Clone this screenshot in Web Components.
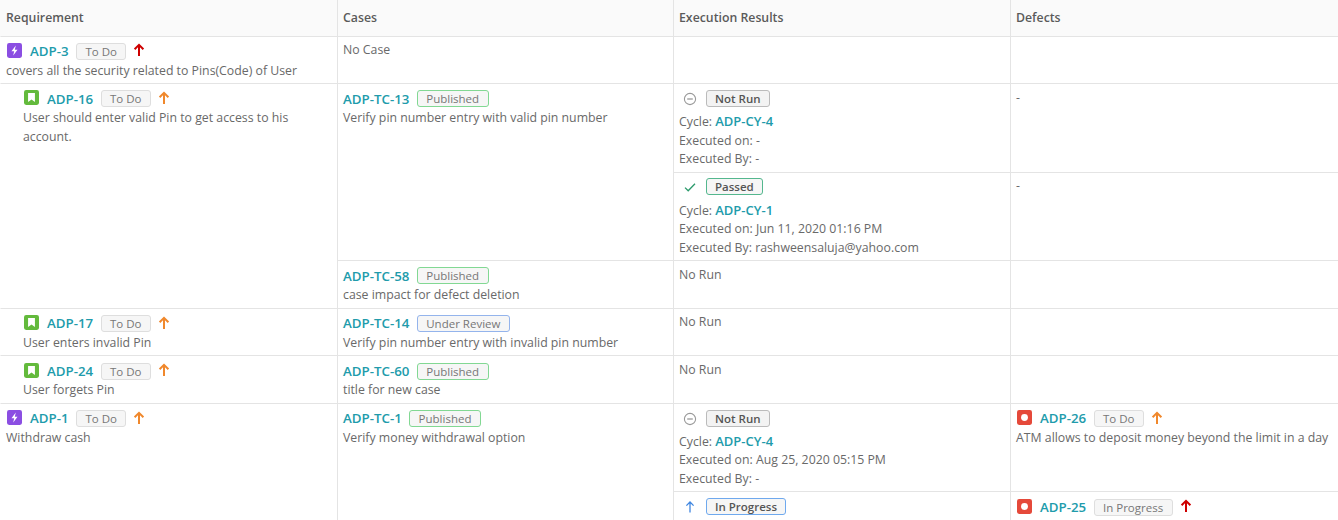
<!DOCTYPE html>
<html>
<head>
<meta charset="utf-8">
<title>Traceability</title>
<style>
    html, body { margin: 0; padding: 0; background: #fff; height: 520px; overflow: hidden; }
    body { font-family: "Open Sans", "Liberation Sans", sans-serif; font-size: 12.3px; color: #696969; }
</style>
</head>
<body>
<trace-table>
    <trace-head lead>Requirement</trace-head>
    <trace-head>Cases</trace-head>
    <trace-head>Execution Results</trace-head>
    <trace-head>Defects</trace-head>

    <trace-cell lead><issue-item type="epic" key="ADP-3" status="To Do" priority="highest">covers all the security related to Pins(Code) of User</issue-item></trace-cell>
    <trace-cell>No Case</trace-cell>
    <trace-cell></trace-cell>
    <trace-cell></trace-cell>

    <trace-cell lead span="3" indent><issue-item type="story" key="ADP-16" status="To Do" priority="high">User should enter valid Pin to get access to his account.</issue-item></trace-cell>
    <trace-cell span="2"><case-item key="ADP-TC-13" status="Published">Verify pin number entry with valid pin number</case-item></trace-cell>
    <trace-cell><exec-item result="Not Run" cycle="ADP-CY-4" on="-" by="-"></exec-item></trace-cell>
    <trace-cell>-</trace-cell>
    <trace-cell><exec-item result="Passed" cycle="ADP-CY-1" on="Jun 11, 2020 01:16 PM" by="rashweensaluja@yahoo.com"></exec-item></trace-cell>
    <trace-cell>-</trace-cell>
    <trace-cell><case-item key="ADP-TC-58" status="Published">case impact for defect deletion</case-item></trace-cell>
    <trace-cell>No Run</trace-cell>
    <trace-cell></trace-cell>

    <trace-cell lead indent><issue-item type="story" key="ADP-17" status="To Do" priority="high">User enters invalid Pin</issue-item></trace-cell>
    <trace-cell><case-item key="ADP-TC-14" status="Under Review">Verify pin number entry with invalid pin number</case-item></trace-cell>
    <trace-cell>No Run</trace-cell>
    <trace-cell></trace-cell>

    <trace-cell lead indent><issue-item type="story" key="ADP-24" status="To Do" priority="high">User forgets Pin</issue-item></trace-cell>
    <trace-cell><case-item key="ADP-TC-60" status="Published">title for new case</case-item></trace-cell>
    <trace-cell>No Run</trace-cell>
    <trace-cell></trace-cell>

    <trace-cell lead span="2"><issue-item type="epic" key="ADP-1" status="To Do" priority="high">Withdraw cash</issue-item></trace-cell>
    <trace-cell span="2"><case-item key="ADP-TC-1" status="Published">Verify money withdrawal option</case-item></trace-cell>
    <trace-cell><exec-item result="Not Run" cycle="ADP-CY-4" on="Aug 25, 2020 05:15 PM" by="-"></exec-item></trace-cell>
    <trace-cell><issue-item type="bug" key="ADP-26" status="To Do" priority="high">ATM allows to deposit money beyond the limit in a day</issue-item></trace-cell>
    <trace-cell tall><exec-item result="In Progress"></exec-item></trace-cell>
    <trace-cell tall><issue-item type="bug" key="ADP-25" status="In Progress" priority="highest"></issue-item></trace-cell>
</trace-table>

<script>
    const ICONS = {
        epic: `<svg viewBox="0 0 14 14" width="15" height="15"><rect width="14" height="14" rx="2" fill="#8b4ee2"/><path d="M8.2 2.4 4.2 7.8h2.5L5.8 11.6l4-5.4H7.3z" fill="#fff"/></svg>`,
        story: `<svg viewBox="0 0 14 14" width="15" height="15"><rect width="14" height="14" rx="2" fill="#63ba3c"/><path d="M3.8 2.8h6.4v8.4L7 8.8l-3.2 2.4z" fill="#fff"/></svg>`,
        bug: `<svg viewBox="0 0 14 14" width="15" height="15"><rect width="14" height="14" rx="2" fill="#e5493a"/><circle cx="7" cy="7" r="3.2" fill="#fff"/></svg>`,
        highest: `<svg viewBox="0 0 12 14" width="12" height="14"><path d="M6 13V2M1.6 6.2 6 1.8l4.4 4.4" fill="none" stroke="#ce0000" stroke-width="2"/></svg>`,
        high: `<svg viewBox="0 0 12 14" width="12" height="14"><path d="M6 13V2M1.6 6.2 6 1.8l4.4 4.4" fill="none" stroke="#f0882c" stroke-width="2"/></svg>`,
        "Not Run": `<svg viewBox="0 0 14 14" width="14" height="14"><circle cx="7" cy="7" r="5.6" fill="none" stroke="#999" stroke-width="1.1"/><path d="M4.2 7h5.6" stroke="#888" stroke-width="1.1"/></svg>`,
        "Passed": `<svg viewBox="0 0 14 14" width="14" height="14"><path d="M2 7.6l3.2 3.2L12 3.8" fill="none" stroke="#2c9a6c" stroke-width="1.3"/></svg>`,
        "In Progress": `<svg viewBox="0 0 14 14" width="14" height="14"><path d="M7 12.5V2.2M3.4 5.6 7 2l3.6 3.6" fill="none" stroke="#3f86e0" stroke-width="1.3"/></svg>`
    }

    class TraceTable extends HTMLElement {
        constructor() {
            super()
            this.attachShadow({ mode: "open" })
            this.shadowRoot.innerHTML = `
            <style>
                :host { display: block; width: 1338px; }
                .grid {
                    display: grid;
                    grid-template-columns: 337px 336px 337px 328px;
                    grid-auto-rows: auto;
                }
            </style>
            <div class="grid"><slot></slot></div>`
        }
    }

    class TraceHead extends HTMLElement {
        constructor() {
            super()
            this.attachShadow({ mode: "open" })
            this.shadowRoot.innerHTML = `
            <style>
                :host {
                    display: block;
                    box-sizing: border-box;
                    height: 36.6px;
                    padding: 9px 5px 0;
                    line-height: 17px;
                    font-weight: 600;
                    color: #5a5a5a;
                    background: #fafafa;
                    border-left: 1px solid #e4e4e4;
                    border-bottom: 1px solid #e4e4e4;
                }
                :host([lead]) { border-left-color: transparent; }
            </style>
            <slot></slot>`
        }
    }

    class TraceCell extends HTMLElement {
        constructor() {
            super()
            this.attachShadow({ mode: "open" })
            this.shadowRoot.innerHTML = `
            <style>
                :host {
                    display: block;
                    box-sizing: border-box;
                    padding: 4.5px 5px 3.1px;
                    line-height: 18.5px;
                    border-left: 1px solid #e4e4e4;
                    border-bottom: 1px solid #e4e4e4;
                }
                :host([lead]) { border-left-color: transparent; }
                :host([indent]) { padding-left: 22px; }
                :host([tall]) { min-height: 88.5px; }
            </style>
            <slot></slot>`
        }
        connectedCallback() {
            const span = this.getAttribute("span")
            if (span) this.style.gridRow = `span ${span}`
        }
    }

    class StatusChip extends HTMLElement {
        constructor() {
            super()
            this.attachShadow({ mode: "open" })
            this.shadowRoot.innerHTML = `
            <style>
                :host {
                    display: inline-block;
                    box-sizing: border-box;
                    height: 17px;
                    padding: 0 8.5px;
                    line-height: 16px;
                    font-size: 11.5px;
                    color: #777;
                    background: #f6f6f6;
                    border: 1px solid #dedede;
                    border-radius: 3px;
                    white-space: nowrap;
                }
                :host([tone="published"]) { border-color: #82d893; }
                :host([tone="review"]) { border-color: #94b4ec; }
                :host([tone="notrun"]) { border-color: #bbb; color: #555; font-weight: 600; padding: 0 8px; background: #f3f3f3; }
                :host([tone="passed"]) { border-color: #54b78e; color: #555; font-weight: 600; padding: 0 8px; }
                :host([tone="progress"]) { border-color: #6fa9ee; color: #555; font-weight: 600; padding: 0 8px; }
            </style>
            <slot></slot>`
        }
    }

    const titleStyles = `
        .title { display: flex; align-items: center; height: 20.5px; }
        .key { font-size: 13.3px; font-weight: 600; color: #219bab; }
        status-chip { margin-left: 7.3px; }
        .pri { display: flex; margin-left: 7px; margin-top: -2px; }
        .icon { display: flex; margin: -2px 8px 0 1px; }
        .desc { display: block; }
    `

    class IssueItem extends HTMLElement {
        constructor() {
            super()
            this.attachShadow({ mode: "open" })
        }
        connectedCallback() {
            const type = this.getAttribute("type")
            const priority = this.getAttribute("priority")
            this.shadowRoot.innerHTML = `
            <style>
                :host { display: block; }
                ${titleStyles}
            </style>
            <div class="title">
                <span class="icon">${ICONS[type]}</span>
                <span class="key">${this.getAttribute("key")}</span>
                <status-chip>${this.getAttribute("status")}</status-chip>
                <span class="pri">${ICONS[priority]}</span>
            </div>
            <span class="desc"><slot></slot></span>`
        }
    }

    class CaseItem extends HTMLElement {
        constructor() {
            super()
            this.attachShadow({ mode: "open" })
        }
        connectedCallback() {
            const status = this.getAttribute("status")
            const tone = status == "Published" ? "published" : "review"
            this.shadowRoot.innerHTML = `
            <style>
                :host { display: block; }
                ${titleStyles}
            </style>
            <div class="title">
                <span class="key">${this.getAttribute("key")}</span>
                <status-chip tone="${tone}">${status}</status-chip>
            </div>
            <span class="desc"><slot></slot></span>`
        }
    }

    class ExecItem extends HTMLElement {
        constructor() {
            super()
            this.attachShadow({ mode: "open" })
        }
        connectedCallback() {
            const result = this.getAttribute("result")
            const tones = { "Not Run": "notrun", "Passed": "passed", "In Progress": "progress" }
            const cycle = this.getAttribute("cycle")
            const details = cycle ? `
                <div>Cycle: <span class="key">${cycle}</span></div>
                <div>Executed on: ${this.getAttribute("on")}</div>
                <div>Executed By: ${this.getAttribute("by")}</div>` : ""
            this.shadowRoot.innerHTML = `
            <style>
                :host { display: block; }
                .state { display: flex; align-items: flex-start; height: 24.4px; padding: 1.3px 0 0 4px; box-sizing: border-box; gap: 9px; }
                .state svg { display: block; margin-top: 2px; }
                .key { font-size: 13px; line-height: 1; font-weight: 600; color: #219bab; }
            </style>
            <div class="state">${ICONS[result]}<status-chip tone="${tones[result]}">${result}</status-chip></div>
            ${details}`
        }
    }

    customElements.define("status-chip", StatusChip)
    customElements.define("issue-item", IssueItem)
    customElements.define("case-item", CaseItem)
    customElements.define("exec-item", ExecItem)
    customElements.define("trace-head", TraceHead)
    customElements.define("trace-cell", TraceCell)
    customElements.define("trace-table", TraceTable)
</script>
</body>
</html>
